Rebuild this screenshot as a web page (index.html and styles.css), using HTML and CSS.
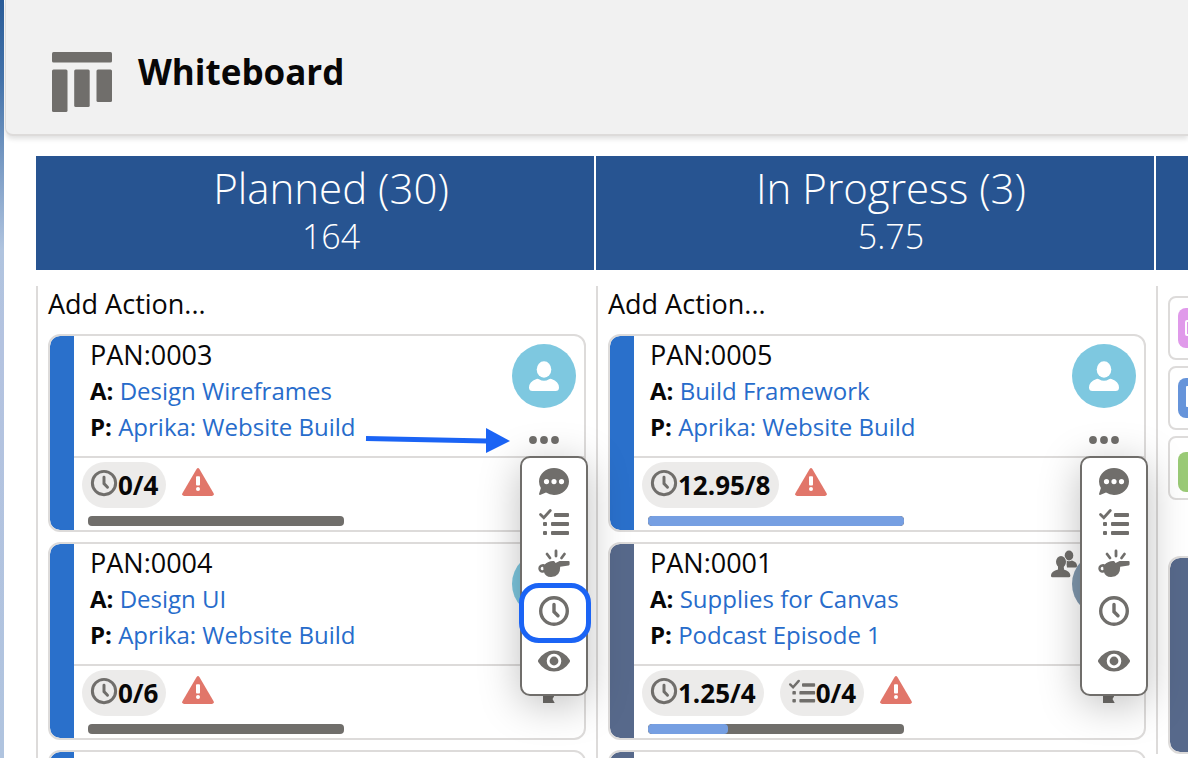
FILE: index.html
```html
<!DOCTYPE html>
<html lang="en">
<head>
<meta charset="utf-8">
<title>Whiteboard</title>
<link rel="stylesheet" href="styles.css">
</head>
<body>
<svg class="sprite" aria-hidden="true">
  <symbol id="clock" viewBox="0 0 32 32"><circle cx="16" cy="16" r="13.3" fill="none" stroke="currentColor" stroke-width="3.4"/><path d="M16 9.500v7.200l4 4.100" fill="none" stroke="currentColor" stroke-width="3.400" stroke-linecap="round"/></symbol>
  <symbol id="alert" viewBox="0 0 32 28"><path d="M14.600 1Q16-.9 17.400 1L31.600 25.300Q32.400 27.600 30 28H2Q-.4 27.600.4 25.300Z" fill="#e1766a"/><path d="M14 9.200q0-.9.900-.9h2.200q.9 0 .9.900v7.300q0 .9-.9.900h-2.200q-.9 0-.9-.9Z" fill="#fff"/><circle cx="16" cy="21" r="2" fill="#fff"/></symbol>
  <symbol id="user" viewBox="0 0 64 64"><ellipse cx="32" cy="25.500" rx="7.300" ry="8.300" fill="#fff"/><path d="M24.500 35q1.300-.4 2.500.3 5 3 10 0 1.200-.7 2.500-.3 7.500 2.800 7.500 8.500 0 3.500-3.500 3.500h-23q-3.500 0-3.500-3.500 0-5.700 7.500-8.500Z" fill="#fff"/></symbol>
  <symbol id="dots" viewBox="0 0 32 10"><g fill="currentColor"><circle cx="5" cy="5" r="3.900"/><circle cx="16" cy="5" r="3.900"/><circle cx="27" cy="5" r="3.900"/></g></symbol>
  <symbol id="chat" viewBox="0 0 32 32"><path fill="currentColor" fill-rule="evenodd" d="M16 2C7.800 2 1 8 1 15.500q0 3.500 1.900 6.500L1 28.100q0 1 1 .8l6-2.300q3.500 2.400 8 2.400c8.200 0 15-6 15-13.500S24.200 2 16 2ZM8.500 13a2.600 2.600 0 1 1 0 5.200 2.600 2.600 0 0 1 0-5.200ZM16 13a2.600 2.600 0 1 1 0 5.200 2.600 2.600 0 0 1 0-5.200ZM23.500 13a2.600 2.600 0 1 1 0 5.200 2.600 2.600 0 0 1 0-5.200Z"/></symbol>
  <symbol id="list" viewBox="0 0 32 32"><path d="M2.500 8.500l3.300 3.300 6.500-7.300" fill="none" stroke="currentColor" stroke-width="2.800" stroke-linecap="round"/><g fill="currentColor"><rect x="16" y="7" width="15" height="4" rx="1"/><rect x="5" y="16" width="4" height="4" rx="1"/><rect x="13" y="16" width="18" height="4" rx="1"/><rect x="5" y="25" width="4" height="4" rx="1"/><rect x="13" y="25" width="18" height="4" rx="1"/></g></symbol>
  <symbol id="whistle" viewBox="0 0 32 32"><path d="M9 6l3 4M18 3v5M26.500 6l-3 4" fill="none" stroke="currentColor" stroke-width="2.800" stroke-linecap="round"/><circle cx="4.500" cy="20.500" r="3" fill="none" stroke="currentColor" stroke-width="2.400"/><path fill="currentColor" d="M4 16.200q1.300-.3 2.600.3 3.900-3.700 8.800-3.500h.7l1.500 2 4-2h9q1 0 1 1v2.200q0 1-1 1.200l-8.400 1.300q.3 9.800-9.100 10.300-6 .1-7.500-6L5 17Z"/></symbol>
  <symbol id="eye" viewBox="0 0 32 32"><path fill="currentColor" fill-rule="evenodd" d="M.2 15Q6.300 5.500 16 5.500T31.800 15q.4 1 0 2-6.100 9.500-15.800 9.500T.2 17q-.4-1 0-2ZM16 8.700a7.300 7.300 0 1 0 0 14.600 7.300 7.300 0 0 0 0-14.600Z"/><circle cx="16" cy="16" r="4.400" fill="currentColor"/></symbol>
  <symbol id="flag" viewBox="0 0 12 16"><path fill="currentColor" d="M0 0h11v9.500L9.500 12l2.200 4H0Z"/></symbol>
  <symbol id="group" viewBox="0 0 28 28"><g fill="currentColor"><ellipse cx="19" cy="5.500" rx="4.300" ry="5"/><path d="M16 10.500q3 1.500 6 0 5 1.500 5 5V16q0 1.500-1.500 1.500H17Z"/><g stroke="#fff" stroke-width="1.500" paint-order="stroke"><path d="M8 15v4.500q-6.500 1.700-7 5.500V26q0 1.200 1.500 1.200h16.300q1.500 0 1.500-1.200v-1q-.5-3.800-6.500-5.500V15Z"/><ellipse cx="11" cy="11.800" rx="5" ry="5.800"/></g><path d="M8 14h5.800v6H8Z"/></g></symbol>
</svg>

<div class="page">
  <header class="page-header">
    <svg class="logo" viewBox="0 0 60 60" aria-hidden="true"><g fill="#706e6b"><rect width="60" height="10.500" rx="1.500"/><rect y="17.500" width="15.500" height="42.500" rx="1.500"/><rect x="22.200" y="17.500" width="15.500" height="37.500" rx="1.500"/><rect x="44.500" y="17.500" width="15.500" height="32.500" rx="1.500"/></g></svg>
    <h1>Whiteboard</h1>
  </header>

  <main class="board">
    <section class="column">
      <header class="column-head"><h2>Planned (30)</h2><p>164</p></header>
      <div class="column-body">
        <button class="add" type="button">Add Action...</button>
        <article class="card">
          <div class="card-top">
            <div class="card-text">
              <p class="code">PAN:0003</p>
              <p><b>A:</b> <a href="#">Design Wireframes</a></p>
              <p><b>P:</b> <a href="#">Aprika: Website Build</a></p>
            </div>
            <div class="card-side">
              <svg class="avatar"><use href="#user"/></svg>
              <button class="more" type="button" aria-label="More actions"><svg><use href="#dots"/></svg></button>
            </div>
          </div>
          <div class="card-foot">
            <div class="badges"><span class="pill"><svg><use href="#clock"/></svg>0/4</span><svg class="alert"><use href="#alert"/></svg></div>
            <div class="bar"></div>
          </div>
          <svg class="arrow" viewBox="0 0 146 28" aria-hidden="true"><path d="M1 12.500L122 15" stroke="#1b64f5" stroke-width="5"/><path d="M121 2l24 13-24 12Z" fill="#1b64f5"/></svg>
          <nav class="menu" aria-label="Card actions">
            <button type="button" aria-label="Comments"><svg><use href="#chat"/></svg></button>
            <button type="button" aria-label="Checklist"><svg><use href="#list"/></svg></button>
            <button type="button" class="mid" aria-label="Nudge"><svg><use href="#whistle"/></svg></button>
            <button type="button" class="tall marked" aria-label="Log time"><svg><use href="#clock"/></svg></button>
            <button type="button" class="tall" aria-label="View"><svg><use href="#eye"/></svg></button>
          </nav>
        </article>
        <article class="card">
          <div class="card-top">
            <div class="card-text">
              <p class="code">PAN:0004</p>
              <p><b>A:</b> <a href="#">Design UI</a></p>
              <p><b>P:</b> <a href="#">Aprika: Website Build</a></p>
            </div>
            <div class="card-side"><svg class="avatar"><use href="#user"/></svg></div>
          </div>
          <div class="card-foot">
            <div class="badges"><span class="pill"><svg><use href="#clock"/></svg>0/6</span><svg class="alert"><use href="#alert"/></svg><svg class="flag"><use href="#flag"/></svg></div>
            <div class="bar"></div>
          </div>
        </article>
        <article class="card"></article>
      </div>
    </section>

    <section class="column">
      <header class="column-head"><h2>In Progress (3)</h2><p>5.75</p></header>
      <div class="column-body">
        <button class="add" type="button">Add Action...</button>
        <article class="card">
          <div class="card-top">
            <div class="card-text">
              <p class="code">PAN:0005</p>
              <p><b>A:</b> <a href="#">Build Framework</a></p>
              <p><b>P:</b> <a href="#">Aprika: Website Build</a></p>
            </div>
            <div class="card-side">
              <svg class="avatar"><use href="#user"/></svg>
              <button class="more" type="button" aria-label="More actions"><svg><use href="#dots"/></svg></button>
            </div>
          </div>
          <div class="card-foot">
            <div class="badges"><span class="pill"><svg><use href="#clock"/></svg>12.95/8</span><svg class="alert"><use href="#alert"/></svg></div>
            <div class="bar"><div class="done" style="width:100%"></div></div>
          </div>
          <nav class="menu" aria-label="Card actions">
            <button type="button" aria-label="Comments"><svg><use href="#chat"/></svg></button>
            <button type="button" aria-label="Checklist"><svg><use href="#list"/></svg></button>
            <button type="button" class="mid" aria-label="Nudge"><svg><use href="#whistle"/></svg></button>
            <button type="button" class="tall" aria-label="Log time"><svg><use href="#clock"/></svg></button>
            <button type="button" class="tall" aria-label="View"><svg><use href="#eye"/></svg></button>
          </nav>
        </article>
        <article class="card slate">
          <div class="card-top">
            <div class="card-text">
              <p class="code">PAN:0001</p>
              <p><b>A:</b> <a href="#">Supplies for Canvas</a></p>
              <p><b>P:</b> <a href="#">Podcast Episode 1</a></p>
            </div>
            <svg class="group"><use href="#group"/></svg>
            <div class="card-side"><svg class="avatar muted"><use href="#user"/></svg></div>
          </div>
          <div class="card-foot">
            <div class="badges"><span class="pill"><svg><use href="#clock"/></svg>1.25/4</span><span class="pill"><svg><use href="#list"/></svg>0/4</span><svg class="alert"><use href="#alert"/></svg><svg class="flag"><use href="#flag"/></svg></div>
            <div class="bar"><div class="done" style="width:31.25%"></div></div>
          </div>
        </article>
        <article class="card slate"></article>
      </div>
    </section>

    <section class="column">
      <header class="column-head"></header>
      <div class="column-body">
        <div class="tiles">
          <div class="tile"><svg viewBox="0 0 40 40"><rect width="40" height="40" rx="8" fill="#e09aea"/><rect x="8" y="13" width="20" height="14" rx="1" fill="none" stroke="#fff" stroke-width="2"/></svg></div>
          <div class="tile"><svg viewBox="0 0 40 40"><rect width="40" height="40" rx="8" fill="#6694da"/><rect x="8" y="8" width="24" height="21" rx="1" fill="#fff"/></svg></div>
          <div class="tile low"><svg viewBox="0 0 40 40"><rect width="40" height="40" rx="8" fill="#9aca76"/></svg></div>
        </div>
        <article class="card slate"></article>
      </div>
    </section>
  </main>
</div>
</body>
</html>
```
FILE: styles.css
```css
* { box-sizing: border-box; }
body {
  margin: 0;
  min-height: 100vh;
  overflow: hidden;
  background: linear-gradient(#2a5c98, #4473aa 80px, #b0c4df 250px, #b4c3e0 340px, #b0c4df);
  color: #080707;
  font-family: "Open Sans", "Noto Sans", sans-serif;
  font-size: 24px;
  line-height: 36px;
}
h1, h2, p { margin: 0; }
a { color: #276ccb; text-decoration: none; }
button { padding: 0; border: 0; background: none; color: inherit; font: inherit; }
svg { display: block; flex: none; }
.sprite { position: absolute; width: 0; height: 0; }

.page { height: 100vh; margin-left: 4px; overflow: hidden; background: #fff; }
.page-header {
  display: flex;
  gap: 26px;
  height: 136px;
  margin-left: 1px;
  padding: 52px 46px;
  border: solid #dddbda;
  border-width: 0 0 2px 1px;
  border-radius: 0 0 0 8px;
  background: #f1f1f1;
  box-shadow: 0 3px 5px rgba(0, 0, 0, .12);
}
.logo { width: 60px; height: 60px; }
h1 { font-size: 35px; line-height: 40px; font-weight: 700; }

.board {
  display: grid;
  grid-auto-flow: column;
  grid-auto-columns: round(down, 47vw, 1px);
  gap: 2px;
  padding: 20px 0 0 32px;
}
.column-head {
  height: 114px;
  padding: 8px 0 0 32px;
  background: #275491;
  color: #fff;
  text-align: center;
  font-weight: 300;
}
.column-head h2 { font-size: 42px; line-height: 48px; font-weight: 300; }
.column-head p { font-size: 34px; line-height: 48px; }
.column-body {
  display: flex;
  flex-direction: column;
  gap: 10px;
  margin-top: 16px;
  padding: 0 8px 0 10px;
  border-left: 2px solid #dddbda;
}
.add { height: 36px; margin-bottom: 2px; font-size: 27px; line-height: 36px; text-align: left; }

.card {
  position: relative;
  height: 198px;
  border: 2px solid #dddbda;
  border-radius: 12px;
  background: linear-gradient(90deg, #2a70cb 24px, #fff 24px);
  background-clip: padding-box;
  padding-left: 24px;
}
.card.slate { background-image: linear-gradient(90deg, #57698b 24px, #fff 24px); }
.card-top {
  display: flex;
  height: 122px;
  padding: 0 8px 0 16px;
  border-bottom: 2px solid #dddbda;
}
.card-text { flex: 1; }
.code { font-size: 27px; line-height: 37px; }
.card-side { display: flex; flex-direction: column; align-items: center; gap: 27px; padding-top: 8px; }
.avatar { width: 64px; height: 64px; border-radius: 50%; background: #7ec8e0; }
.avatar.muted { background: #8199af; }
.more { color: #706e6b; }
.more svg { width: 32px; height: 10px; }
.group { width: 28px; height: 28px; margin-top: 6px; margin-right: -6px; color: #706e6b; }

.card-foot { padding: 4px 26px 0 8px; }
.badges { display: flex; gap: 16px; height: 46px; }
.pill {
  display: flex;
  align-items: center;
  padding: 0 8px;
  border-radius: 23px;
  background: #ecebea;
  font-size: 26px;
  font-weight: 700;
}
.pill svg { width: 28px; height: 28px; margin-bottom: 4px; color: #706e6b; }
.alert { width: 32px; height: 28px; margin-top: 6px; }
.flag { width: 12px; height: 16px; margin: 17px 3px 0 auto; color: #706e6b; }
.bar { width: 256px; height: 10px; margin: 8px 0 0 6px; border-radius: 4px; background: #706e6b; overflow: hidden; }
.done { height: 10px; border-radius: 4px; background: #769fe2; }

.menu {
  position: absolute;
  z-index: 2;
  top: 120px;
  right: -4px;
  display: flex;
  flex-direction: column;
  width: 68px;
  height: 240px;
  padding: 4px 0;
  border: 2px solid #706e6b;
  border-radius: 10px;
  background: #fff;
  color: #706e6b;
  box-shadow: 0 8px 40px rgba(0, 0, 0, .25);
}
.menu button { display: grid; place-items: center; height: 40px; }
.menu svg { width: 32px; height: 32px; }
.menu .mid { height: 44px; }
.menu .tall { height: 50px; }
.menu .marked { position: relative; }
.marked::after {
  content: "";
  position: absolute;
  inset: -3px -5px -7px -3px;
  border: 5px solid #1b64f5;
  border-radius: 20px;
}
.arrow { position: absolute; top: 90px; right: 73px; width: 146px; height: 28px; }

.tiles { display: flex; flex-direction: column; gap: 6px; padding-top: 10px; margin-bottom: 46px; }
.tile { height: 64px; padding: 10px 8px; border: 2px solid #dddbda; border-radius: 8px; }
.tile.low { padding-top: 14px; }
.tile svg { width: 40px; height: 40px; }
```
